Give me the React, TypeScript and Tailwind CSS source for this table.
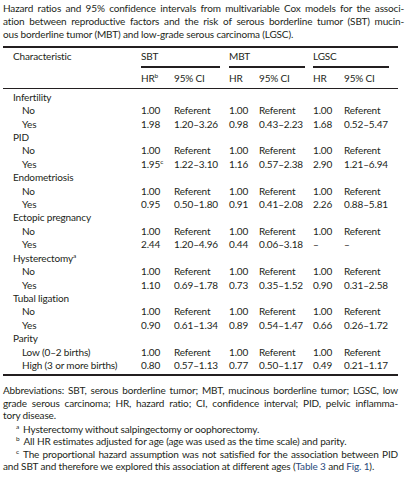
const rows: { label: string; sub?: boolean; sup?: string; cells?: string[]; hrSup?: string }[] = [
  { label: 'Infertility' },
  { label: 'No', sub: true, cells: ['1.00', 'Referent', '1.00', 'Referent', '1.00', 'Referent'] },
  { label: 'Yes', sub: true, cells: ['1.98', '1.20–3.26', '0.98', '0.43–2.23', '1.68', '0.52–5.47'] },
  { label: 'PID' },
  { label: 'No', sub: true, cells: ['1.00', 'Referent', '1.00', 'Referent', '1.00', 'Referent'] },
  { label: 'Yes', sub: true, hrSup: 'c', cells: ['1.95', '1.22–3.10', '1.16', '0.57–2.38', '2.90', '1.21–6.94'] },
  { label: 'Endometriosis' },
  { label: 'No', sub: true, cells: ['1.00', 'Referent', '1.00', 'Referent', '1.00', 'Referent'] },
  { label: 'Yes', sub: true, cells: ['0.95', '0.50–1.80', '0.91', '0.41–2.08', '2.26', '0.88–5.81'] },
  { label: 'Ectopic pregnancy' },
  { label: 'No', sub: true, cells: ['1.00', 'Referent', '1.00', 'Referent', '1.00', 'Referent'] },
  { label: 'Yes', sub: true, cells: ['2.44', '1.20–4.96', '0.44', '0.06–3.18', '–', '–'] },
  { label: 'Hysterectomy', sup: 'a' },
  { label: 'No', sub: true, cells: ['1.00', 'Referent', '1.00', 'Referent', '1.00', 'Referent'] },
  { label: 'Yes', sub: true, cells: ['1.10', '0.69–1.78', '0.73', '0.35–1.52', '0.90', '0.31–2.58'] },
  { label: 'Tubal ligation' },
  { label: 'No', sub: true, cells: ['1.00', 'Referent', '1.00', 'Referent', '1.00', 'Referent'] },
  { label: 'Yes', sub: true, cells: ['0.90', '0.61–1.34', '0.89', '0.54–1.47', '0.66', '0.26–1.72'] },
  { label: 'Parity' },
  { label: 'Low (0–2 births)', sub: true, cells: ['1.00', 'Referent', '1.00', 'Referent', '1.00', 'Referent'] },
  { label: 'High (3 or more births)', sub: true, cells: ['0.80', '0.57–1.13', '0.77', '0.50–1.17', '0.49', '0.21–1.17'] },
];

const grid = 'grid grid-cols-[138px_33px_55px_30px_54px_31px_54px]';
const sup = 'text-[6.5px] top-[-4px]';

function Line({ children }: { children: React.ReactNode }) {
  return <span className="block text-justify [text-align-last:justify]">{children}</span>;
}

export default function App() {
  return (
    <div className="w-[417px] h-[478px] bg-white px-[3px] pt-[2px] font-['Lato',sans-serif] text-[10px] tracking-[-0.15px] text-[#231f20] overflow-hidden">
      <p className="leading-[13px] pr-[10px]">
        <Line>Hazard ratios and 95% confidence intervals from multivariable Cox models for the associ-</Line>
        <Line>ation between reproductive factors and the risk of serous borderline tumor (SBT) mucin-</Line>
        <span className="block">ous borderline tumor (MBT) and low-grade serous carcinoma (LGSC).</span>
      </p>

      <div className="mt-[5px] w-[395px]">
        <div className="h-[2px] bg-[#231f20]" />
        <div className={`${grid} leading-[13.4px] pt-[2px]`}>
          <div className="pl-[10px]">Characteristic</div>
          <div className="col-span-2">
            SBT
            <div className="h-[1.5px] bg-[#231f20] mr-[9px] mt-[3px]" />
          </div>
          <div className="col-span-2">
            MBT
            <div className="h-[1.5px] bg-[#231f20] mr-[8px] mt-[3px]" />
          </div>
          <div className="col-span-2">
            LGSC
            <div className="h-[1.5px] bg-[#231f20] mr-[9px] mt-[3px]" />
          </div>
          <div className="pt-[4px]" />
          <div className="pt-[4px]">
            HR<sup className={sup}>b</sup>
          </div>
          <div className="pt-[4px]">95% CI</div>
          <div className="pt-[4px]">HR</div>
          <div className="pt-[4px]">95% CI</div>
          <div className="pt-[4px]">HR</div>
          <div className="pt-[4px]">95% CI</div>
        </div>
        <div className="h-px bg-[#231f20] mt-[3px]" />
        <div className="pt-[1.5px] pb-[2px] leading-[13.4px]">
          {rows.map((r, i) =>
            r.cells ? (
              <div key={i} className={grid}>
                <div className="pl-[19px] whitespace-nowrap">{r.label}</div>
                {r.cells.map((c, j) => (
                  <div key={j} className="whitespace-nowrap">
                    {c}
                    {j === 0 && r.hrSup ? <sup className={sup}>{r.hrSup}</sup> : null}
                  </div>
                ))}
              </div>
            ) : (
              <div key={i} className="pl-[10px]">
                {r.label}
                {r.sup ? <sup className={sup}>{r.sup}</sup> : null}
              </div>
            ),
          )}
        </div>
        <div className="h-[2px] bg-[#231f20]" />
      </div>

      <div className="mt-[8px] w-[395px] leading-[12.5px]">
        <p>
          <Line>Abbreviations: SBT, serous borderline tumor; MBT, mucinous borderline tumor; LGSC, low</Line>
          <Line>grade serous carcinoma; HR, hazard ratio; CI, confidence interval; PID, pelvic inflamma-</Line>
          <span className="block">tory disease.</span>
        </p>
        <p className="mt-[1px] pl-[13px]">
          <sup className={`${sup} mr-[4px]`}>a</sup>Hysterectomy without salpingectomy or oophorectomy.
        </p>
        <p className="pl-[13px]">
          <sup className={`${sup} mr-[4px]`}>b</sup>All HR estimates adjusted for age (age was used as the time scale) and parity.
        </p>
        <p>
          <Line>
            <span className="pl-[13px]">
              <sup className={`${sup} mr-[4px]`}>c</sup>
            </span>
            The proportional hazard assumption was not satisfied for the association between PID
          </Line>
          <span className="block">
            and SBT and therefore we explored this association at different ages (
            <span className="text-[#2b4a7d]">Table 3</span> and <span className="text-[#2b4a7d]">Fig. 1</span>).
          </span>
        </p>
      </div>
    </div>
  );
}
